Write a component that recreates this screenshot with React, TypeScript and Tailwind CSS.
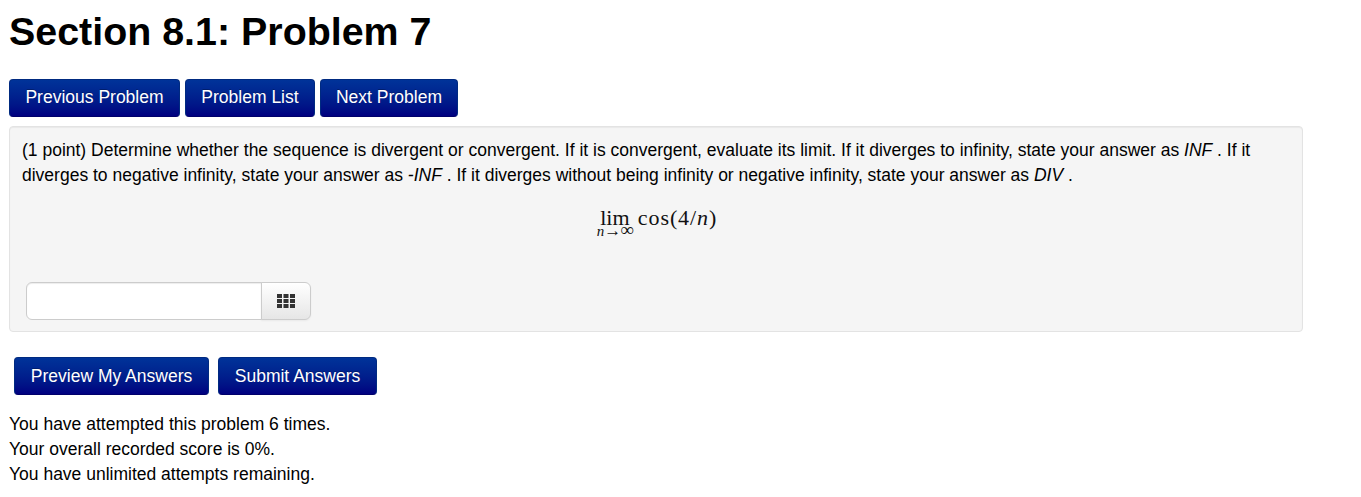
export default function App() {
  const btn = "h-[38px] rounded-[4px] border border-[#002a80] border-b-[#00006a] bg-gradient-to-b from-[#003399] to-[#000080] text-white text-[17.5px] leading-[25px] [text-shadow:0_-1px_0_rgba(0,0,0,0.25)] whitespace-nowrap text-center";
  return (
    <div className="h-[497px] px-[9px] bg-white text-black text-[17.5px] leading-[25px] font-['Liberation_Sans',Arial,sans-serif] overflow-hidden">
      <h1 className="pt-[9px] h-[79px] text-[39.4px] leading-[44px] font-bold">Section 8.1: Problem 7</h1>
      <div className="flex gap-[5px]">
        <button className={`${btn} pb-[2px] w-[171px]`}>Previous Problem</button>
        <button className={`${btn} pb-[2px] w-[130px]`}>Problem List</button>
        <button className={`${btn} pb-[2px] w-[138px]`}>Next Problem</button>
      </div>
      <div className="mt-[9px] w-[1294px] h-[206px] rounded-[4px] border border-[#e3e3e3] bg-[#f5f5f5] pl-[12px] pt-[11px] shadow-[inset_0_1px_1px_rgba(0,0,0,0.05)]">
        <p>
          (1 point) Determine whether the sequence is divergent or convergent. If it is convergent, evaluate its limit. If it diverges to infinity, state your answer as <i>INF</i> . If it diverges to negative infinity, state your answer as <i>-INF</i> . If it diverges without being infinity or negative infinity, state your answer as <i>DIV</i> .
        </p>
        <div className="mt-[17px] flex justify-center items-start font-['Liberation_Serif',serif] text-[#111] pr-[10px]">
          <div className="flex flex-col items-center">
            <span className="text-[22px] leading-[25px]">lim</span>
            <span className="-mt-[6px] text-[15px] leading-[11px] italic whitespace-nowrap">n<span className="not-italic tracking-[-1px]"><span className="text-[17px]">→</span><span className="text-[19px]">∞</span></span></span>
          </div>
          <span className="ml-[5px] text-[22px] leading-[25px] tracking-[0.9px] whitespace-nowrap">cos(4/<i>n</i>)</span>
        </div>
        <div className="mt-[45px] ml-[4px] flex w-[285px] h-[38px]">
          <input className="w-[236px] h-full bg-white border border-[#cccccc] rounded-l-[6px] shadow-[inset_0_1px_1px_rgba(0,0,0,0.075)]" />
          <div className="flex-1 -ml-px flex items-center justify-center border border-[#cccccc] rounded-r-[6px] bg-gradient-to-b from-[#ffffff] to-[#e6e6e6] shadow-[0_1px_2px_rgba(0,0,0,0.05)]">
            <svg width="18" height="14" viewBox="0 0 18 14" className="fill-[#333]">
              <rect x="0" y="0" width="5" height="4" /><rect x="6.5" y="0" width="5" height="4" /><rect x="13" y="0" width="5" height="4" />
              <rect x="0" y="5" width="5" height="4" /><rect x="6.5" y="5" width="5" height="4" /><rect x="13" y="5" width="5" height="4" />
              <rect x="0" y="10" width="5" height="4" /><rect x="6.5" y="10" width="5" height="4" /><rect x="13" y="10" width="5" height="4" />
            </svg>
          </div>
        </div>
      </div>
      <div className="mt-[25px] ml-[5px] flex gap-[9px]">
        <button className={`${btn} w-[195px]`}>Preview My Answers</button>
        <button className={`${btn} w-[159px]`}>Submit Answers</button>
      </div>
      <div className="mt-[17px]">
        <p>You have attempted this problem 6 times.</p>
        <p>Your overall recorded score is 0%.</p>
        <p>You have unlimited attempts remaining.</p>
      </div>
    </div>
  );
}
